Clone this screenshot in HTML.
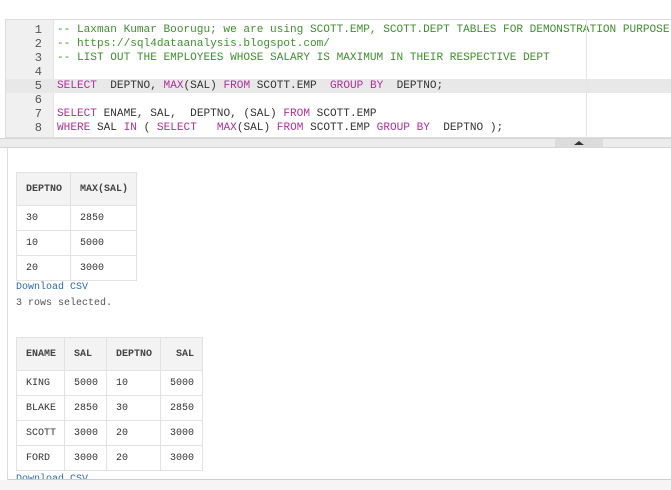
<!DOCTYPE html>
<html><head><meta charset="utf-8"><style>
*{margin:0;padding:0;box-sizing:border-box}
body{width:671px;height:490px;overflow:hidden;background:#fff;font-family:"Liberation Mono",monospace;position:relative}
.ed{position:absolute;left:5px;top:19px;width:666px;height:119px;border:1px solid #ddd;border-right:none;background:#fff;overflow:hidden}
.gut{position:absolute;left:0;top:0;width:48px;height:100%;background:#f0f0f0;border-right:1px solid #e4e4e4}
.ln{position:absolute;left:0;width:666px;height:14px;font-size:11.1px;line-height:14px;color:#333;white-space:pre}
.ln .n{position:absolute;left:0;width:36px;text-align:right;color:#555;font-size:12px}
.ln .t{position:absolute;left:51px}
.hl{background:#e8e8e8}
.c{color:#3f8f2f}.k{color:#b0309a}
.rule{position:absolute;left:586px;top:19px;width:1px;height:119px;background:#e6e6e6}
.bar{position:absolute;left:0;top:138px;width:671px;height:10px;background:#ececec;border-top:1px solid #d6d6d6;border-bottom:1px solid #d6d6d6}
.hd{position:absolute;left:555px;top:0;width:48px;height:8px;background:#dcdcdc}
.tri{position:absolute;left:574px;top:2px;width:0;height:0;border-left:5px solid transparent;border-right:5px solid transparent;border-bottom:4px solid #333}
.res{position:absolute;left:7px;top:148px;width:664px;height:332px;border-left:1px solid #ddd;border-bottom:1px solid #ccc;background:#fff;overflow:hidden}
.below{position:absolute;left:0;top:480px;width:671px;height:10px;background:#f5f5f5}
table{position:absolute;border-collapse:collapse;font-size:10px;color:#333}
td,th{border:1px solid #e2e2e2;padding:0 0 0 9px;text-align:left;height:25px}
th{background:#f3f3f3;height:33px;font-weight:bold;color:#444}
.r{text-align:right;padding:0 8px 0 0}
.a{position:absolute;font-size:10px;color:#2b6bb3;left:8px}
.s{position:absolute;font-size:10px;color:#555;left:8px}
</style></head><body>
<div class="ed">
<div class="gut"></div>
<div class="ln" style="top:3px"><span class="n">1</span><span class="t c">-- Laxman Kumar Boorugu; we are using SCOTT.EMP, SCOTT.DEPT TABLES FOR DEMONSTRATION PURPOSE</span></div>
<div class="ln" style="top:17px"><span class="n">2</span><span class="t c">-- https://sql4dataanalysis.blogspot.com/</span></div>
<div class="ln" style="top:31px"><span class="n">3</span><span class="t c">-- LIST OUT THE EMPLOYEES WHOSE SALARY IS MAXIMUM IN THEIR RESPECTIVE DEPT</span></div>
<div class="ln" style="top:45px"><span class="n">4</span></div>
<div class="ln hl" style="top:59px"><span class="n">5</span><span class="t"><span class="k">SELECT</span>  DEPTNO, <span class="k">MAX</span>(SAL) <span class="k">FROM</span> SCOTT.EMP  <span class="k">GROUP BY</span>  DEPTNO;</span></div>
<div class="ln" style="top:73px"><span class="n">6</span></div>
<div class="ln" style="top:87px"><span class="n">7</span><span class="t"><span class="k">SELECT</span> ENAME, SAL,  DEPTNO, (SAL) <span class="k">FROM</span> SCOTT.EMP</span></div>
<div class="ln" style="top:101px"><span class="n">8</span><span class="t"><span class="k">WHERE</span> SAL <span class="k">IN</span> ( <span class="k">SELECT</span>   <span class="k">MAX</span>(SAL) <span class="k">FROM</span> SCOTT.EMP <span class="k">GROUP BY</span>  DEPTNO );</span></div>
<div class="ln" style="top:115px"><span class="n">9</span></div>
</div>
<div class="rule"></div>
<div class="bar"><div class="hd"></div><div class="tri"></div></div>
<div class="res">
<table style="left:8px;top:24px;width:121px">
<tr><th style="width:54px">DEPTNO</th><th>MAX(SAL)</th></tr>
<tr><td>30</td><td>2850</td></tr>
<tr><td>10</td><td>5000</td></tr>
<tr><td>20</td><td>3000</td></tr>
</table>
<div class="a" style="top:134px">Download CSV</div>
<div class="s" style="top:150px">3 rows selected.</div>
<table style="left:8px;top:189px;width:187px">
<tr><th style="width:48px">ENAME</th><th style="width:42px">SAL</th><th style="width:54px">DEPTNO</th><th class="r">SAL</th></tr>
<tr><td>KING</td><td>5000</td><td>10</td><td class="r">5000</td></tr>
<tr><td>BLAKE</td><td>2850</td><td>30</td><td class="r">2850</td></tr>
<tr><td>SCOTT</td><td>3000</td><td>20</td><td class="r">3000</td></tr>
<tr><td>FORD</td><td>3000</td><td>20</td><td class="r">3000</td></tr>
</table>
<div class="a" style="top:326px">Download CSV</div>
</div>
<div class="below"></div>
</body></html>
